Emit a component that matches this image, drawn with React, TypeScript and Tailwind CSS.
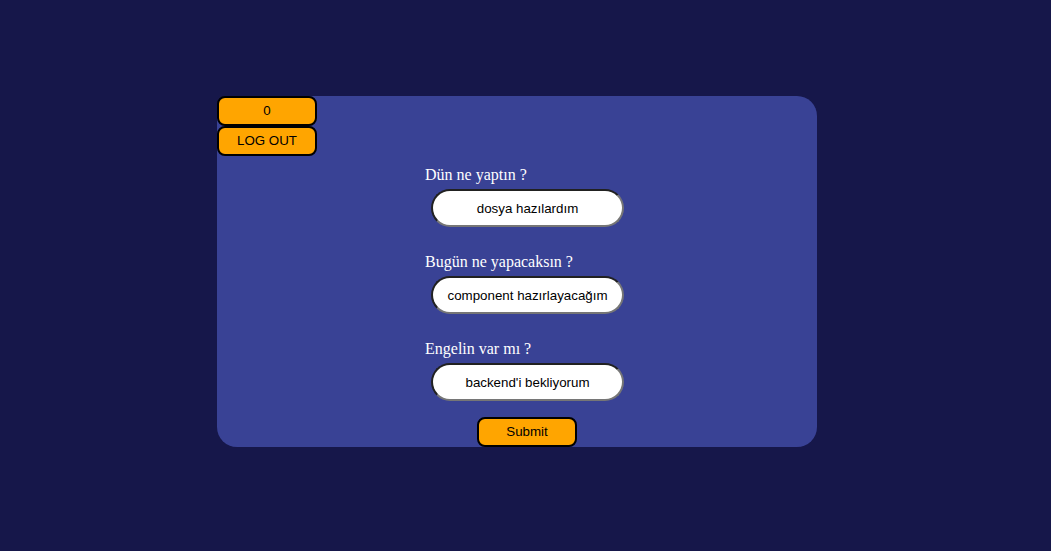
import { useState } from 'react'

const fields = [
  { label: 'Dün ne yaptın ?', value: 'dosya hazılardım' },
  { label: 'Bugün ne yapacaksın ?', value: 'component hazırlayacağım' },
  { label: 'Engelin var mı ?', value: "backend'i bekliyorum" },
]

export default function App() {
  const [values, setValues] = useState(fields.map((f) => f.value))

  return (
    <div className="min-h-screen w-full bg-[#16174a] pt-[96px] font-['Liberation_Sans',Arial,sans-serif]">
      <div className="ml-[217px] flex h-[351px] w-[600px] flex-col rounded-[20px] bg-[#394295]">
        <div className="flex w-[100px] flex-col">
          <button className="h-[30px] rounded-[8px] border-2 border-black bg-[#ffa500] text-[13.33px] text-black">
            0
          </button>
          <button className="h-[30px] rounded-[8px] border-2 border-black bg-[#ffa500] text-[13.33px] text-black">
            LOG OUT
          </button>
        </div>

        <form className="mt-[10px] flex flex-col" onSubmit={(e) => e.preventDefault()}>
          {fields.map((f, i) => (
            <div key={f.label} className={`ml-[208px] flex flex-col ${i > 0 ? 'mt-[26px]' : ''}`}>
              <label className="h-[18px] font-['Liberation_Serif','Times_New_Roman',serif] text-[16px] leading-[18px] text-white">
                {f.label}
              </label>
              <input
                className="mt-[5px] ml-[6px] h-[38px] w-[193px] rounded-full border-2 border-[#767676] bg-white text-center text-[13.33px] text-black outline-none [border-style:inset]"
                value={values[i]}
                onChange={(e) => setValues(values.map((v, j) => (j === i ? e.target.value : v)))}
              />
            </div>
          ))}
          <button
            type="submit"
            className="mt-[16px] ml-[260px] h-[30px] w-[100px] rounded-[8px] border-2 border-black bg-[#ffa500] text-[13.33px] text-black"
          >
            Submit
          </button>
        </form>
      </div>
    </div>
  )
}
